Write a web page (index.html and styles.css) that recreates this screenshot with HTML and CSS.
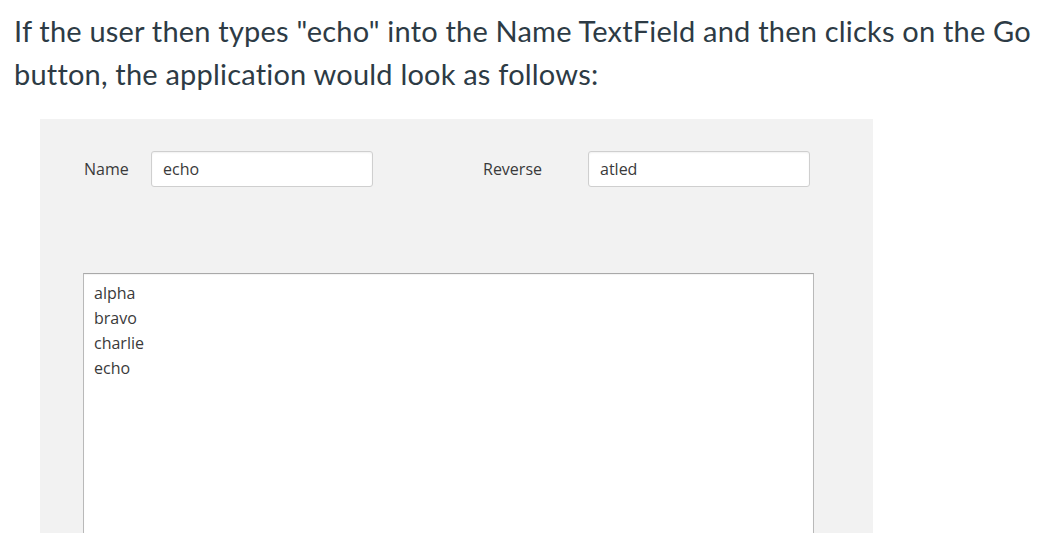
FILE: index.html
```html
<!DOCTYPE html>
<html>
<head>
<meta charset="utf-8">
<link rel="stylesheet" href="styles.css">
</head>
<body>
<p class="intro">If the user then types "echo" into the Name TextField and then clicks on the Go button, the application would look as follows:</p>
<div class="app">
  <div class="row">
    <span class="label label-name">Name</span>
    <div class="field">echo</div>
    <span class="label label-rev">Reverse</span>
    <div class="field">atled</div>
  </div>
  <div class="list">
    <div class="item">alpha</div>
    <div class="item">bravo</div>
    <div class="item">charlie</div>
    <div class="item">echo</div>
  </div>
</div>
</body>
</html>
```

FILE: styles.css
```css
html, body {
  margin: 0;
  padding: 0;
  background: #ffffff;
}

.intro {
  margin: 0;
  padding: 9px 9px 0 14px;
  font-family: Lato, "Liberation Sans", sans-serif;
  font-size: 29px;
  letter-spacing: 0.2px;
  line-height: 43px;
  color: #2d3b45;
}

.app {
  margin: 24px 0 0 40px;
  width: 833px;
  height: 414px;
  background: #f2f2f2;
  overflow: hidden;
  font-family: "Open Sans", "Noto Sans", sans-serif;
  font-size: 16px;
  color: #3a3a3a;
}

.row {
  display: flex;
  align-items: center;
  padding: 32px 0 0 44px;
}

.label {
  flex: none;
}

.label-name {
  width: 67px;
}

.label-rev {
  margin-left: 110px;
  width: 105px;
}

.field {
  flex: none;
  box-sizing: border-box;
  width: 222px;
  height: 36px;
  padding: 0 11px;
  line-height: 34px;
  background: #ffffff;
  border: 1px solid #cfcfcf;
  border-radius: 3px;
  box-shadow: inset 0 1px 2px rgba(0, 0, 0, 0.06);
}

.list {
  box-sizing: border-box;
  margin: 86px 0 0 43px;
  width: 731px;
  height: 320px;
  padding: 7px 10px;
  background: #ffffff;
  border: 1px solid #b9b9b9;
  border-top-color: #a9a9a9;
  box-shadow: inset 0 1px 1px rgba(0, 0, 0, 0.05);
}

.item {
  height: 25px;
  line-height: 25px;
}
```
